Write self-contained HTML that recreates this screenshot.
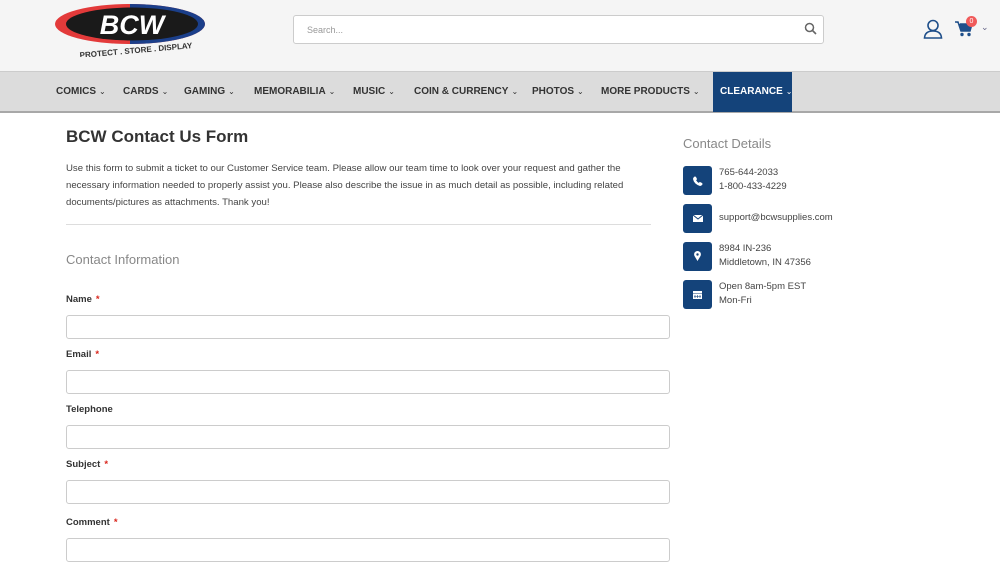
<!DOCTYPE html>
<html><head><style>
*{margin:0;padding:0;box-sizing:border-box}
body{width:1000px;height:550px;overflow:hidden;background:#fff;font-family:"Liberation Sans",sans-serif;color:#333;position:relative}
.hdr{position:absolute;left:0;top:0;width:1000px;height:71px;background:#f5f5f5}
.nav{position:absolute;left:0;top:71px;width:1000px;height:42px;background:#dcdcdc;border-top:1px solid #ccc;border-bottom:2px solid #a8a8a8}
.nav span{position:absolute;top:14px;font-size:10px;font-weight:bold;color:#333;letter-spacing:0}
.nav span i{font-style:normal;font-weight:normal;font-size:8px;margin-left:3px}
.clr{position:absolute;left:713px;top:0;width:79px;height:40px;background:#14437a}
.search{position:absolute;left:293px;top:15px;width:531px;height:29px;border:1px solid #ccc;border-radius:3px;background:#fff;font-size:9px;color:#999;padding:9px 13px}
.abs{position:absolute}
h1{position:absolute;left:66px;top:127px;font-size:17px;font-weight:bold;color:#333}
.intro{position:absolute;left:66px;top:160px;width:590px;font-size:9.6px;line-height:17px;color:#444}
.hr{position:absolute;left:66px;top:224px;width:585px;height:1px;background:#ddd}
.ci{position:absolute;left:66px;top:252px;font-size:13px;color:#888}
.lbl{position:absolute;left:66px;font-size:9.5px;font-weight:bold;color:#333}
.lbl b{color:#d9261c;margin-left:4px}
.inp{position:absolute;left:66px;width:604px;height:24px;border:1px solid #ccc;border-radius:3px}
.cd{position:absolute;left:683px;top:136px;font-size:13px;color:#888}
.ic{position:absolute;left:683px;width:29px;height:29px;background:#14437a;border-radius:3px}
.ct{position:absolute;left:719px;font-size:9.5px;line-height:14px;color:#444}
</style></head><body>
<div class="hdr">
<svg class="abs" style="left:54px;top:3px" width="155" height="54" viewBox="0 0 155 54">
<ellipse cx="76" cy="21" rx="75" ry="20" fill="#e33a3a"/>
<path d="M76 1 A75 20 0 0 1 76 41 Z" fill="#1b3f8a"/>
<ellipse cx="78" cy="21" rx="66" ry="16.5" fill="#1a1a1a"/>
<text x="78" y="31" text-anchor="middle" font-family="Liberation Sans" font-weight="bold" font-style="italic" font-size="27" fill="#fff">BCW</text>
<text x="82" y="50" text-anchor="middle" font-family="Liberation Sans" font-weight="bold" font-size="8" fill="#333" transform="rotate(-5 82 48)">PROTECT . STORE . DISPLAY</text>
</svg>
<div class="search">Search...</div>
<svg class="abs" style="left:804px;top:22px" width="13" height="13" viewBox="0 0 13 13"><circle cx="5.5" cy="5.5" r="4" fill="none" stroke="#666" stroke-width="1.5"/><path d="M8.5 8.5L12 12" stroke="#666" stroke-width="1.6"/></svg>
<svg class="abs" style="left:923px;top:19px" width="20" height="20" viewBox="0 0 20 20"><circle cx="10" cy="6.5" r="5" fill="none" stroke="#1f4f8a" stroke-width="1.6"/><path d="M1.5 19 Q2 12 10 12 Q18 12 18.5 19 Z" fill="none" stroke="#1f4f8a" stroke-width="1.6"/></svg>
<svg class="abs" style="left:955px;top:21px" width="18" height="16" viewBox="0 0 18 16"><path d="M0 1h3l3 9h9l2-7H5" fill="#1f4f8a" stroke="#1f4f8a" stroke-width="1.5"/><circle cx="7" cy="13.5" r="1.7" fill="#1f4f8a"/><circle cx="14" cy="13.5" r="1.7" fill="#1f4f8a"/></svg>
<div class="abs" style="left:966px;top:16px;width:11px;height:11px;border-radius:50%;background:#f05a5a;color:#fff;font-size:7px;text-align:center;line-height:11px">0</div>
<div class="abs" style="left:981px;top:22px;font-size:9px;color:#668">&#8964;</div>
</div>
<div class="nav">
<div class="clr"></div>
<span style="left:56px">COMICS<i>&#8964;</i></span>
<span style="left:123px">CARDS<i>&#8964;</i></span>
<span style="left:184px">GAMING<i>&#8964;</i></span>
<span style="left:254px">MEMORABILIA<i>&#8964;</i></span>
<span style="left:353px">MUSIC<i>&#8964;</i></span>
<span style="left:414px">COIN &amp; CURRENCY<i>&#8964;</i></span>
<span style="left:532px">PHOTOS<i>&#8964;</i></span>
<span style="left:601px">MORE PRODUCTS<i>&#8964;</i></span>
<span style="left:720px;color:#fff">CLEARANCE<i>&#8964;</i></span>
</div>
<h1>BCW Contact Us Form</h1>
<div class="intro">Use this form to submit a ticket to our Customer Service team. Please allow our team time to look over your request and gather the necessary information needed to properly assist you. Please also describe the issue in as much detail as possible, including related documents/pictures as attachments. Thank you!</div>
<div class="hr"></div>
<div class="ci">Contact Information</div>
<div class="lbl" style="top:294px">Name<b>*</b></div><div class="inp" style="top:315px"></div>
<div class="lbl" style="top:349px">Email<b>*</b></div><div class="inp" style="top:370px"></div>
<div class="lbl" style="top:404px">Telephone</div><div class="inp" style="top:425px"></div>
<div class="lbl" style="top:459px">Subject<b>*</b></div><div class="inp" style="top:480px"></div>
<div class="lbl" style="top:517px">Comment<b>*</b></div><div class="inp" style="top:538px"></div>
<div class="cd">Contact Details</div>
<div class="ic" style="top:166px"><svg width="29" height="29" viewBox="0 0 29 29"><path d="M11 11 q1-1 2 0 l1 2 q0 1-1 1 q1 2 3 3 q0-1 1-1 l2 1 q1 1 0 2 q-1 1-2 1 q-6-2-7-7 q0-1 1-2z" fill="#fff"/></svg></div>
<div class="ct" style="top:166px">765-644-2033<br>1-800-433-4229</div>
<div class="ic" style="top:204px"><svg width="29" height="29" viewBox="0 0 29 29"><rect x="10" y="11" width="10" height="7" fill="#fff"/><path d="M10 11l5 4 5-4" stroke="#14437a" stroke-width="1" fill="none"/></svg></div>
<div class="ct" style="top:211px">support@bcwsupplies.com</div>
<div class="ic" style="top:242px"><svg width="29" height="29" viewBox="0 0 29 29"><path d="M14.5 19 l-3-5 a3.4 3.4 0 1 1 6 0z" fill="#fff"/><circle cx="14.5" cy="12.5" r="1.2" fill="#14437a"/></svg></div>
<div class="ct" style="top:242px">8984 IN-236<br>Middletown, IN 47356</div>
<div class="ic" style="top:280px"><svg width="29" height="29" viewBox="0 0 29 29"><rect x="10" y="11" width="9" height="8" fill="#fff"/><path d="M10 13.5h9M12 15v3M14.5 15v3M17 15v3M11 16.5h7" stroke="#14437a" stroke-width=".6"/></svg></div>
<div class="ct" style="top:280px">Open 8am-5pm EST<br>Mon-Fri</div>
</body></html>
